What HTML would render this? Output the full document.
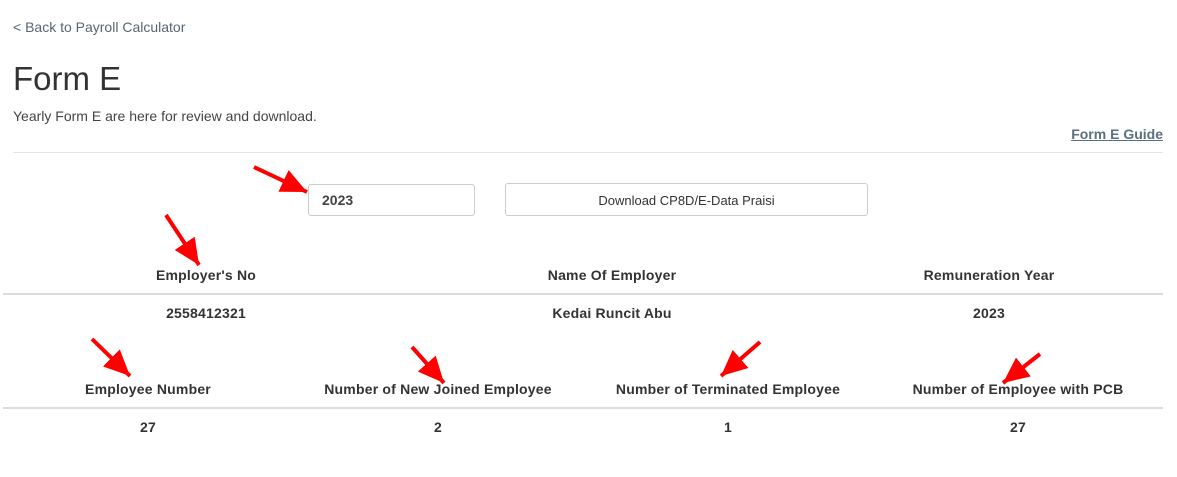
<!DOCTYPE html>
<html><head><style>
body{margin:0;width:1177px;height:477px;background:#fff;font-family:"Liberation Sans",sans-serif;color:#333;position:relative;overflow:hidden}
.a{position:absolute;white-space:nowrap}
.c{position:absolute;transform:translateX(-50%);white-space:nowrap;font-weight:bold;font-size:14px;color:#333;letter-spacing:0.2px}
.hr{position:absolute;height:2px;background:#ddd}
</style></head><body>
<div class="a" style="left:13px;top:19px;font-size:14px;color:#5a6570">&lt; Back to Payroll Calculator</div>
<div class="a" style="left:13px;top:60px;font-size:33px;color:#333">Form E</div>
<div class="a" style="left:13px;top:108px;font-size:14px;color:#444">Yearly Form E are here for review and download.</div>
<div class="a" style="right:14px;top:126px;font-size:14px;font-weight:bold;color:#5a6f80;text-decoration:underline">Form E Guide</div>
<div class="hr" style="left:13px;width:1150px;top:152px;height:1px;background:#e5e5e5"></div>
<div class="a" style="left:308px;top:184px;width:167px;height:32px;border:1px solid #ccc;border-radius:3px;box-sizing:border-box;font-weight:bold;font-size:14px;line-height:31px;padding-left:13px;color:#444">2023</div>
<div class="a" style="left:505px;top:183px;width:363px;height:33px;border:1px solid #ccc;border-radius:3px;box-sizing:border-box;font-size:13px;line-height:33px;text-align:center;color:#333">Download CP8D/E-Data Praisi</div>
<div class="c" style="left:206px;top:267px">Employer's No</div>
<div class="c" style="left:612px;top:267px">Name Of Employer</div>
<div class="c" style="left:989px;top:267px">Remuneration Year</div>
<div class="hr" style="left:3px;width:1160px;top:293px"></div>
<div class="c" style="left:206px;top:305px">2558412321</div>
<div class="c" style="left:612px;top:305px">Kedai Runcit Abu</div>
<div class="c" style="left:989px;top:305px">2023</div>
<div class="c" style="left:148px;top:381px">Employee Number</div>
<div class="c" style="left:438px;top:381px">Number of New Joined Employee</div>
<div class="c" style="left:728px;top:381px">Number of Terminated Employee</div>
<div class="c" style="left:1018px;top:381px">Number of Employee with PCB</div>
<div class="hr" style="left:3px;width:1160px;top:407px"></div>
<div class="c" style="left:148px;top:419px">27</div>
<div class="c" style="left:438px;top:419px">2</div>
<div class="c" style="left:728px;top:419px">1</div>
<div class="c" style="left:1018px;top:419px">27</div>
<svg width="1177" height="477" style="position:absolute;left:0;top:0">
<defs><marker id="m" markerUnits="userSpaceOnUse" markerWidth="28" markerHeight="24" refX="26" refY="12" orient="auto"><path d="M0,0 L26,12 L0,24 Z" fill="#f00"/></marker></defs>
<g stroke="#f00" stroke-width="4" marker-end="url(#m)">
<line x1="254" y1="167" x2="307" y2="192"/>
<line x1="166" y1="215" x2="199" y2="265"/>
<line x1="92" y1="339" x2="130" y2="376"/>
<line x1="412" y1="347" x2="444" y2="383"/>
<line x1="760" y1="342" x2="721" y2="376"/>
<line x1="1040" y1="354" x2="1003" y2="383"/>
</g></svg>
</body></html>
